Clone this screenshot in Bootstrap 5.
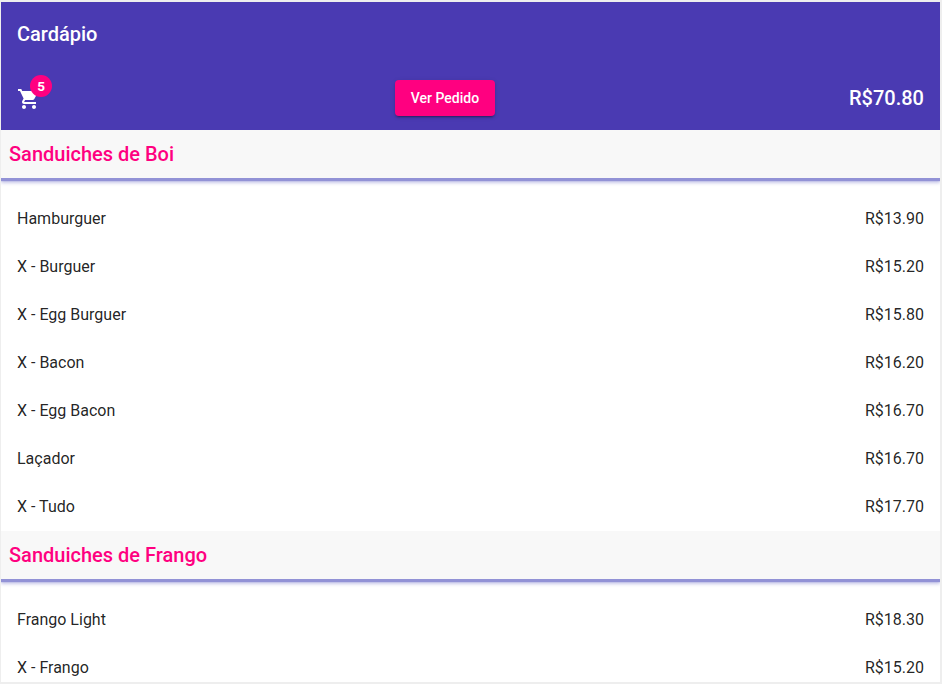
<!DOCTYPE html>
<html lang="pt">
<head>
    <meta charset="UTF-8">
    <meta name="viewport" content="width=device-width, initial-scale=1.0">
    <title>Cardápio</title>
    <link href="https://cdn.jsdelivr.net/npm/bootstrap@5.3.0/dist/css/bootstrap.min.css" rel="stylesheet">
    <style>
        html, body {
            height: 100%;
            overflow: hidden;
        }
        body {
            background-color: #eeeeee;
            font-family: Roboto, "Liberation Sans", sans-serif;
            padding: 2px 2px 0 1px;
        }
        .app-shell {
            background-color: #fff;
            height: 680px;
            overflow: hidden;
        }
        .top-bar {
            background-color: #4a3ab2;
            color: #fff;
        }
        .top-row {
            height: 64px;
            padding: 0 16px;
        }
        .top-title {
            font-size: 20px;
            font-weight: 500;
        }
        .cart-box {
            width: 24px;
            height: 24px;
        }
        .cart-count {
            top: -11px;
            right: -11px;
            width: 22px;
            height: 22px;
            background-color: #ff0080;
            font-size: 13.5px;
            font-weight: 700;
        }
        .order-btn {
            background-color: #ff0080;
            color: #fff;
            font-size: 14px;
            font-weight: 500;
            height: 36px;
            width: 100px;
            padding: 0;
            border: 0;
            border-radius: 4px;
            box-shadow: 0 3px 1px -2px rgba(0,0,0,.2), 0 2px 2px 0 rgba(0,0,0,.14), 0 1px 5px 0 rgba(0,0,0,.12);
        }
        .order-total {
            font-size: 20px;
            font-weight: 500;
        }
        .section-head {
            height: 48px;
            padding: 0 8px;
            background-color: #f8f8f8;
            color: #ff0080;
            font-size: 20px;
            font-weight: 500;
            line-height: 48px;
            box-shadow: 0 3px 1px 0 #9292d6, 0 5px 3px 0 rgba(146,146,214,.5);
            position: relative;
        }
        .menu-list {
            padding-top: 17px;
        }
        .menu-row {
            height: 48px;
            padding: 0 16px;
            font-size: 16px;
            color: rgba(0,0,0,.87);
        }
    </style>
</head>
<body>
<div class="app-shell">
    <div class="top-bar">
        <div class="top-row d-flex align-items-center">
            <span class="top-title">Cardápio</span>
        </div>
        <div class="top-row d-flex align-items-center justify-content-between">
            <div class="cart-box position-relative">
                <svg width="24" height="24" viewBox="0 0 24 24" fill="#fff"><path d="M7 18c-1.1 0-1.99.9-1.99 2S5.900 22 7 22s2-.9 2-2-.9-2-2-2zM1 2v2h2l3.600 7.590-1.350 2.450c-.16.280-.25.610-.25.960 0 1.100.9 2 2 2h12v-2H7.420c-.14 0-.25-.11-.25-.25l.03-.12.9-1.630h7.450c.75 0 1.410-.41 1.750-1.030l3.580-6.490A1 1 0 0 0 20 4H5.210l-.94-2H1zm16 16c-1.100 0-1.990.9-1.990 2s.89 2 1.990 2 2-.9 2-2-.9-2-2-2z"/></svg>
                <span class="cart-count position-absolute rounded-circle d-flex align-items-center justify-content-center">5</span>
            </div>
            <button type="button" class="btn order-btn">Ver Pedido</button>
            <span class="order-total">R$70.80</span>
        </div>
    </div>

    <div class="section-head">Sanduiches de Boi</div>
    <div class="menu-list">
        <div class="menu-row d-flex align-items-center justify-content-between"><span>Hamburguer</span><span>R$13.90</span></div>
        <div class="menu-row d-flex align-items-center justify-content-between"><span>X - Burguer</span><span>R$15.20</span></div>
        <div class="menu-row d-flex align-items-center justify-content-between"><span>X - Egg Burguer</span><span>R$15.80</span></div>
        <div class="menu-row d-flex align-items-center justify-content-between"><span>X - Bacon</span><span>R$16.20</span></div>
        <div class="menu-row d-flex align-items-center justify-content-between"><span>X - Egg Bacon</span><span>R$16.70</span></div>
        <div class="menu-row d-flex align-items-center justify-content-between"><span>Laçador</span><span>R$16.70</span></div>
        <div class="menu-row d-flex align-items-center justify-content-between"><span>X - Tudo</span><span>R$17.70</span></div>
    </div>

    <div class="section-head">Sanduiches de Frango</div>
    <div class="menu-list">
        <div class="menu-row d-flex align-items-center justify-content-between"><span>Frango Light</span><span>R$18.30</span></div>
        <div class="menu-row d-flex align-items-center justify-content-between"><span>X - Frango</span><span>R$15.20</span></div>
    </div>
</div>
<script src="https://cdn.jsdelivr.net/npm/bootstrap@5.3.0/dist/js/bootstrap.bundle.min.js"></script>
</body>
</html>
